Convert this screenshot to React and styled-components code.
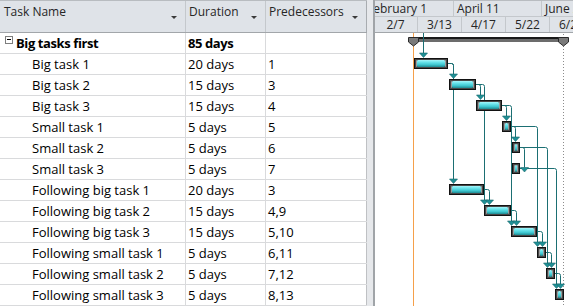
import React from 'react';
import styled, { createGlobalStyle } from 'styled-components';

const GlobalStyle = createGlobalStyle`
  html, body { margin: 0; padding: 0; background: #fff; overflow: hidden; }
  body { font-family: "Open Sans", "Liberation Sans", sans-serif; }
`;

const Screen = styled.div`
  display: flex;
  width: 573px;
  height: 306px;
  overflow: hidden;
  background: #fff;
`;

const Table = styled.div`
  display: flex;
  flex-direction: column;
  width: 367px;
  flex: none;
`;

const COLS = '186px 80px 101px';

const HeaderRow = styled.div`
  display: grid;
  grid-template-columns: ${COLS};
  height: 33px;
  box-sizing: border-box;
  background: #dfe3e8;
  border-top: 1px solid #b8bcc0;
  border-bottom: 1px solid #a2a6aa;
`;

const HeaderCell = styled.div`
  display: flex;
  justify-content: space-between;
  align-items: flex-start;
  box-sizing: border-box;
  padding: 2px 8px 0 ${p => p.$pad}px;
  border-right: 1px solid ${p => (p.$last ? '#a8acb0' : '#c4c8cc')};
  font-size: 12px;
  line-height: 18px;
  color: #262626;
  white-space: nowrap;
`;

const SortArrow = styled.span`
  flex: none;
  margin-top: 13px;
  width: 0;
  height: 0;
  border-left: 3px solid transparent;
  border-right: 3px solid transparent;
  border-top: 3px solid #3a3a3a;
`;

const Row = styled.div`
  display: grid;
  grid-template-columns: ${COLS};
  height: 21px;
  box-sizing: border-box;
  border-bottom: 1px solid #d9dadc;
`;

const Cell = styled.div`
  display: flex;
  align-items: center;
  box-sizing: border-box;
  padding-left: ${p => p.$pad}px;
  border-right: 1px solid ${p => (p.$last ? '#bfc1c4' : '#d9dadc')};
  font-size: 13px;
  line-height: 20px;
  color: #000;
  white-space: nowrap;
  overflow: hidden;
  font-weight: ${p => (p.$bold ? 700 : 400)};
  letter-spacing: ${p => (p.$bold ? '-0.4px' : '0')};
`;

const CollapseBox = styled.span`
  position: relative;
  flex: none;
  align-self: flex-start;
  margin-top: 3px;
  margin-right: 3px;
  width: 8px;
  height: 8px;
  box-sizing: border-box;
  border: 1px solid #7e7e7e;
  background: #fff;
  &::after {
    content: '';
    position: absolute;
    left: 1px;
    top: 2px;
    width: 4px;
    height: 1px;
    background: #000;
  }
`;

const Splitter = styled.div`
  flex: none;
  width: 8px;
  box-sizing: border-box;
  background: #e6e8eb;
  border-right: 2px solid #a0a4a8;
`;

const Gantt = styled.div`
  flex: 1;
  display: flex;
  flex-direction: column;
  overflow: hidden;
  min-width: 0;
`;

const GanttHeader = styled.div`
  height: 33px;
  box-sizing: border-box;
  background: #dfe3e8;
  border-top: 1px solid #b8bcc0;
  border-bottom: 1px solid #a2a6aa;
  display: flex;
  flex-direction: column;
  overflow: hidden;
`;

const Tier = styled.div`
  display: flex;
  height: ${p => p.$h}px;
  box-sizing: border-box;
  border-bottom: ${p => (p.$divided ? '1px solid #c4c8cc' : 'none')};
  margin-left: ${p => p.$shift}px;
`;

const TierCell = styled.div`
  flex: none;
  width: ${p => p.$w}px;
  box-sizing: border-box;
  border-right: 1px solid #c4c8cc;
  padding-left: ${p => (p.$center ? 0 : 3)}px;
  text-align: ${p => (p.$center ? 'center' : 'left')};
  font-size: 12px;
  line-height: 15px;
  color: #262626;
  white-space: nowrap;
`;

const ChartArea = styled.div`
  flex: 1;
  background: #fff;
  svg { display: block; }
`;

const rows = [
  { name: 'Big tasks first', dur: '85 days', pred: '', summary: true },
  { name: 'Big task 1', dur: '20 days', pred: '1' },
  { name: 'Big task 2', dur: '15 days', pred: '3' },
  { name: 'Big task 3', dur: '15 days', pred: '4' },
  { name: 'Small task 1', dur: '5 days', pred: '5' },
  { name: 'Small task 2', dur: '5 days', pred: '6' },
  { name: 'Small task 3', dur: '5 days', pred: '7' },
  { name: 'Following big task 1', dur: '20 days', pred: '3' },
  { name: 'Following big task 2', dur: '15 days', pred: '4,9' },
  { name: 'Following big task 3', dur: '15 days', pred: '5,10' },
  { name: 'Following small task 1', dur: '5 days', pred: '6,11' },
  { name: 'Following small task 2', dur: '5 days', pred: '7,12' },
  { name: 'Following small task 3', dur: '5 days', pred: '8,13' },
];

const bars = [
  [1, 414, 448], [2, 449, 476], [3, 476, 502], [4, 502, 511],
  [5, 512, 520], [6, 512, 520], [7, 449, 484], [8, 484, 511],
  [9, 511, 537], [10, 537, 546], [11, 546, 555], [12, 555, 564],
];

// [fromRow, vx, toRow, customTip]
const links = [
  [1, 453, 2], [1, 453, 7], [2, 480, 3], [2, 484, 8],
  [3, 506, 4], [3, 511, 9], [4, 515, 5], [4, 537, 10],
  [5, 524, 6, 172], [5, 547, 11], [6, 556, 12], [7, 489, 8],
  [8, 516, 9], [9, 542, 10], [10, 551, 11], [11, 560, 12],
];

const barTop = r => 37 + 21 * r;
const barEnd = r => bars.find(b => b[0] === r)[2];

const LINE = '#1b6f73';
const ARROW = '#1f9096';

const Arrow = ({ x, tip }) => (
  <polygon points={`${x - 4},${tip - 4.5} ${x + 4},${tip - 4.5} ${x},${tip}`} fill={ARROW} stroke="#17686c" strokeWidth="0.6" />
);

const TaskBar = ({ x1, x2, y }) => {
  const w = x2 - x1;
  const h = 11;
  return (
    <g>
      <rect x={x1} y={y} width={w} height={h} fill="#121212" />
      <rect x={x1 + 1} y={y + 1} width={w - 2} height={h - 2} fill="#474747" />
      <path d={`M${x1 + 3} ${y + 2.5} H${x1 + 2.5} V${y + h - 2.5} H${x1 + 3}`} stroke="#9c9c9c" fill="none" />
      <path d={`M${x2 - 3} ${y + 2.5} H${x2 - 2.5} V${y + h - 2.5} H${x2 - 3}`} stroke="#9c9c9c" fill="none" />
      <rect x={x1 + 3} y={y + 2} width={w - 6} height={h - 4} rx="1.2" fill="url(#cyanFill)" />
    </g>
  );
};

const Chart = () => (
  <svg width="198" height="273" viewBox="375 33 198 273">
    <defs>
      <linearGradient id="cyanFill" x1="0" y1="0" x2="0" y2="1">
        <stop offset="0" stopColor="#a6f5fa" />
        <stop offset="0.3" stopColor="#6ae4ec" />
        <stop offset="0.65" stopColor="#40c8d1" />
        <stop offset="1" stopColor="#1f8b93" />
      </linearGradient>
    </defs>
    <line x1="413.5" y1="33" x2="413.5" y2="306" stroke="#f5a04a" />
    <line x1="563.5" y1="34" x2="563.5" y2="306" stroke="#8c8c8c" strokeDasharray="1 2" />

    {/* summary */}
    <rect x="412" y="37" width="153" height="2" fill="#1a1a1a" />
    <rect x="412" y="39" width="153" height="3" fill="#6c6c6c" />
    <polygon points="408.5,37.5 418.5,37.5 418.5,42 413.5,46 408.5,42" fill="#7a7a7a" stroke="#2a2a2a" />
    <polygon points="558.5,37.5 568.5,37.5 568.5,42 563.5,46 558.5,42" fill="#7a7a7a" stroke="#2a2a2a" />

    {/* incoming link from above */}
    <line x1="423.5" y1="33" x2="423.5" y2={barTop(1) - 4.5} stroke={LINE} />

    {links.map(([from, vx, to], i) => {
      const cy = barTop(from) + 5.5;
      const x = vx + 0.5;
      const tip = links[i][3] || barTop(to) - 0.5;
      return (
        <path
          key={i}
          d={`M${barEnd(from)} ${cy} H${x - 2} Q${x} ${cy} ${x} ${cy + 2} V${tip - 4.5}`}
          stroke={LINE}
          fill="none"
        />
      );
    })}

    {bars.map(([r, x1, x2]) => (
      <TaskBar key={r} x1={x1} x2={x2} y={barTop(r)} />
    ))}

    <Arrow x={423.5} tip={barTop(1) - 0.5} />
    {links.map(([from, vx, to, tipY], i) => (
      <Arrow key={i} x={vx + 0.5} tip={tipY || barTop(to) - 0.5} />
    ))}
  </svg>
);

const App = () => (
  <>
    <GlobalStyle />
    <Screen>
      <Table>
        <HeaderRow>
          <HeaderCell $pad={4}>Task Name<SortArrow /></HeaderCell>
          <HeaderCell $pad={3}>Duration<SortArrow /></HeaderCell>
          <HeaderCell $pad={3} $last>Predecessors<SortArrow /></HeaderCell>
        </HeaderRow>
        {rows.map(r => (
          <Row key={r.name}>
            <Cell $pad={r.summary ? 5 : 32} $bold={r.summary}>
              {r.summary && <CollapseBox />}
              {r.name}
            </Cell>
            <Cell $pad={2} $bold={r.summary}>{r.dur}</Cell>
            <Cell $pad={2} $last>{r.pred}</Cell>
          </Row>
        ))}
      </Table>
      <Splitter />
      <Gantt>
        <GanttHeader>
          <Tier $h={16} $divided $shift={-11}>
            <TierCell $w={90}>February 1</TierCell>
            <TierCell $w={88}>April 11</TierCell>
            <TierCell $w={88}>June 20</TierCell>
          </Tier>
          <Tier $h={15} $shift={-1}>
            <TierCell $w={44} $center>2/7</TierCell>
            <TierCell $w={44} $center>3/13</TierCell>
            <TierCell $w={44} $center>4/17</TierCell>
            <TierCell $w={44} $center>5/22</TierCell>
            <TierCell $w={44} $center>6/26</TierCell>
          </Tier>
        </GanttHeader>
        <ChartArea>
          <Chart />
        </ChartArea>
      </Gantt>
    </Screen>
  </>
);

export default App;
